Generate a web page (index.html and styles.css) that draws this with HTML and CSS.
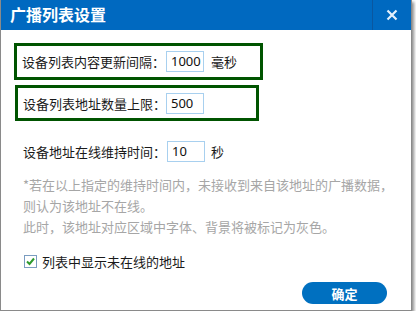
FILE: index.html
```html
<!DOCTYPE html>
<html lang="zh">
<head>
<meta charset="utf-8">
<link rel="stylesheet" href="styles.css">
</head>
<body>
<div class="window">
  <div class="titlebar">
    <div class="title">广播列表设置</div>
    <div class="close">
      <svg width="12" height="12" viewBox="0 0 12 12"><path d="M1.5 1.5 L10.5 10.5 M10.5 1.5 L1.5 10.5" stroke="#e4f0fb" stroke-width="2.2" fill="none"/></svg>
    </div>
  </div>
  <div class="content">
    <div class="box box1">
      <span class="label">设备列表内容更新间隔：</span>
      <span class="input">1000</span>
      <span class="unit">毫秒</span>
    </div>
    <div class="box box2">
      <span class="label">设备列表地址数量上限：</span>
      <span class="input">500</span>
    </div>
    <div class="row">
      <span class="label">设备地址在线维持时间：</span>
      <span class="input">10</span>
      <span class="unit">秒</span>
    </div>
    <div class="note">
      <div>*若在以上指定的维持时间内，未接收到来自该地址的广播数据，</div>
      <div>则认为该地址不在线。</div>
      <div>此时，该地址对应区域中字体、背景将被标记为灰色。</div>
    </div>
    <div class="check-row">
      <span class="checkbox"><svg width="13" height="13" viewBox="0 0 13 13"><rect x="0.5" y="0.5" width="12" height="12" fill="#fff" stroke="#7a9cc0"/><path d="M3 6.5 L5.5 9 L10 3.5" stroke="#2e9a2e" stroke-width="2" fill="none"/></svg></span>
      <span class="check-label">列表中显示未在线的地址</span>
    </div>
    <div class="actions">
      <button class="ok">确定</button>
    </div>
  </div>
</div>
</body>
</html>
```
FILE: styles.css
```css
html, body {
  margin: 0;
  padding: 0;
  background: #ffffff;
}
body {
  font-family: "Noto Sans CJK SC", "Noto Sans", sans-serif;
  font-size: 13px;
  color: #1a1a1a;
}
.window {
  width: 410px;
  height: 310px;
  border-left: 1px solid #8a8a8a;
  border-right: 1px solid #8a8a8a;
  border-bottom: 1px solid #8a8a8a;
  box-shadow: 2px 2px 3px rgba(0,0,0,0.45);
  background: #fff;
  display: flex;
  flex-direction: column;
}
.titlebar {
  height: 30px;
  background: #0069c0;
  display: flex;
  align-items: stretch;
  flex: none;
}
.title {
  flex: 1;
  color: #fff;
  font-weight: bold;
  font-size: 16px;
  line-height: 29px;
  padding-left: 9px;
}
.close {
  width: 38px;
  border-left: 1px solid #0a57a0;
  display: flex;
  align-items: center;
  justify-content: center;
}
.content {
  padding-left: 13px;
}
.box {
  box-sizing: border-box;
  border: 3px solid #005400;
  display: flex;
  align-items: center;
  padding-left: 5px;
}
.box1 {
  margin-top: 13px;
  width: 249px;
  height: 37px;
}
.box2 {
  margin-top: 5px;
  margin-left: 1px;
  width: 244px;
  height: 36px;
}
.label {
  display: inline-block;
  width: 144px;
  white-space: nowrap;
}
.box2 .label {
  width: 143px;
}
.input {
  box-sizing: border-box;
  display: inline-block;
  width: 38px;
  height: 21px;
  line-height: 19px;
  border: 1px solid #a8d0ef;
  padding-left: 4px;
  font-family: "Noto Sans", "Noto Sans CJK SC", sans-serif;
  font-size: 13px;
  color: #101010;
}
.unit {
  margin-left: 7px;
}
.row {
  margin-top: 20px;
  display: flex;
  align-items: center;
  padding-left: 9px;
  height: 21px;
}
.row .unit {
  margin-left: 6px;
}
.note {
  margin-top: 12px;
  padding-left: 9px;
  color: #a6a6a6;
  line-height: 21px;
  white-space: nowrap;
}
.check-row {
  margin-top: 17px;
  padding-left: 10px;
  display: flex;
  align-items: center;
  height: 14px;
}
.checkbox {
  display: inline-flex;
  width: 13px;
  height: 13px;
}
.check-label {
  margin-left: 5px;
}
.actions {
  display: flex;
  justify-content: flex-end;
  padding-right: 24px;
  margin-top: 14px;
}
.ok {
  width: 85px;
  height: 22px;
  border: none;
  border-radius: 11px;
  background: #0070c0;
  color: #fff;
  font-family: "Noto Sans CJK SC", sans-serif;
  font-weight: bold;
  font-size: 13px;
  padding: 0;
}
```
